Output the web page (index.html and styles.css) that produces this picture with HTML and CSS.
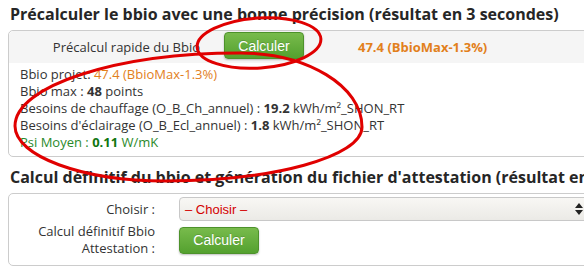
FILE: index.html
```html
<!DOCTYPE html>
<html lang="fr">

<head>
  <meta charset="UTF-8">
  <meta name="viewport" content="width=device-width, initial-scale=1.0">
  <title>Calcul Bbio</title>
  <link rel="stylesheet" href="styles.css">
</head>

<body>
  <div class="page">
    <h3 class="title">Précalculer le bbio avec une bonne précision (résultat en 3 secondes)</h3>
    <div class="box">
      <div class="quick">
        <span class="quick-label">Précalcul rapide du Bbio</span>
        <button class="btn quick-btn">Calculer</button>
        <span class="quick-result">47.4 (BbioMax-1.3%)</span>
      </div>
      <ul class="details">
        <li>Bbio projet: <span class="orange">47.4 (BbioMax-1.3%)</span></li>
        <li>Bbio max : <b>48</b> points</li>
        <li>Besoins de chauffage (O_B_Ch_annuel) : <b>19.2</b> kWh/m²_SHON_RT</li>
        <li>Besoins d'éclairage (O_B_Ecl_annuel) : <b>1.8</b> kWh/m²_SHON_RT</li>
        <li class="green">Psi Moyen : <b>0.11</b> W/mK</li>
      </ul>
    </div>

    <h3 class="title">Calcul définitif du bbio et génération du fichier d'attestation (résultat en 3 secondes)</h3>
    <div class="box form">
      <div class="row">
        <label class="label">Choisir :</label>
        <div class="select">
          <span>– Choisir –</span>
          <svg class="arrows" width="8" height="12" viewBox="0 0 8 12">
            <path d="M4 0 L8 5 L0 5 Z M0 7 L8 7 L4 12 Z" fill="#222" />
          </svg>
        </div>
      </div>
      <div class="row">
        <label class="label">Calcul définitif Bbio<br>Attestation :</label>
        <button class="btn">Calculer</button>
      </div>
    </div>
  </div>

  <!-- annotations au feutre rouge -->
  <svg class="marks" width="584" height="270" viewBox="0 0 584 270">
    <ellipse cx="259" cy="43" rx="62" ry="25" transform="rotate(-4 259 43)" />
    <path d="M15 126 C15 86 116 53 240 53 C307 53 362 86 362 127 C362 157 273 181 165 181 C82 181 15 156 15 126 Z" />
  </svg>
</body>

</html>
```

FILE: styles.css
```css
* {
  margin: 0;
  padding: 0;
  box-sizing: border-box;
}

html,
body {
  overflow: hidden;
}

body {
  font-family: "Open Sans", "DejaVu Sans", sans-serif;
  font-size: 13px;
  color: #333;
  background: #fff;
}

.page {
  width: 640px;
  padding-left: 8px;
}

.title {
  font-size: 16px;
  font-weight: 700;
  line-height: 20px;
  color: #262626;
  white-space: nowrap;
  margin: 4px 0 6px 2px;
}

.box + .title {
  margin-top: 10px;
}

.box {
  border: 1px solid #ccc;
  border-radius: 5px;
}

.quick {
  display: flex;
  align-items: center;
  height: 32px;
  background: #f5f5f5;
  border-radius: 5px 0 0 0;
}

.quick-label {
  width: 191px;
  text-align: right;
}

.quick-btn {
  margin-left: 24px;
  margin-bottom: 3px;
}

.quick-result {
  margin-left: 54px;
  font-weight: 700;
  color: #e2801b;
}

.details {
  list-style: none;
  padding: 3px 0 5px 11px;
  line-height: 17px;
}

.orange {
  color: #e2801b;
}

.green {
  color: #2b8a2b;
}

.green b {
  color: #0f760f;
}

.form {
  padding: 3px 0 8px;
}

.row {
  display: flex;
  align-items: center;
  gap: 24px;
}

.row + .row {
  margin-top: 2px;
}

.label {
  width: 146px;
  text-align: right;
  line-height: 17px;
}

.select {
  display: flex;
  align-items: center;
  justify-content: space-between;
  width: 411px;
  height: 24px;
  padding: 0 6px 0 5px;
  border: 1px solid #c8c8c8;
  border-radius: 4px;
  background: linear-gradient(#f8f7f4, #ebeae6);
  font-family: "Liberation Sans", Arial, sans-serif;
  font-size: 13px;
  color: #d40000;
}

.btn {
  width: 80px;
  height: 27px;
  border: 1px solid #4d922b;
  border-radius: 4px;
  background: linear-gradient(#78bb4c, #54a12f);
  box-shadow: 0 1px 2px rgba(0, 0, 0, 0.25);
  color: #fff;
  font-family: "Liberation Sans", Arial, sans-serif;
  font-size: 14px;
  text-shadow: 0 -1px 0 rgba(0, 0, 0, 0.15);
}

.marks {
  position: absolute;
  top: 0;
  left: 0;
  pointer-events: none;
}

.marks ellipse,
.marks path {
  fill: none;
  stroke: #e00000;
  stroke-width: 3;
}
```
